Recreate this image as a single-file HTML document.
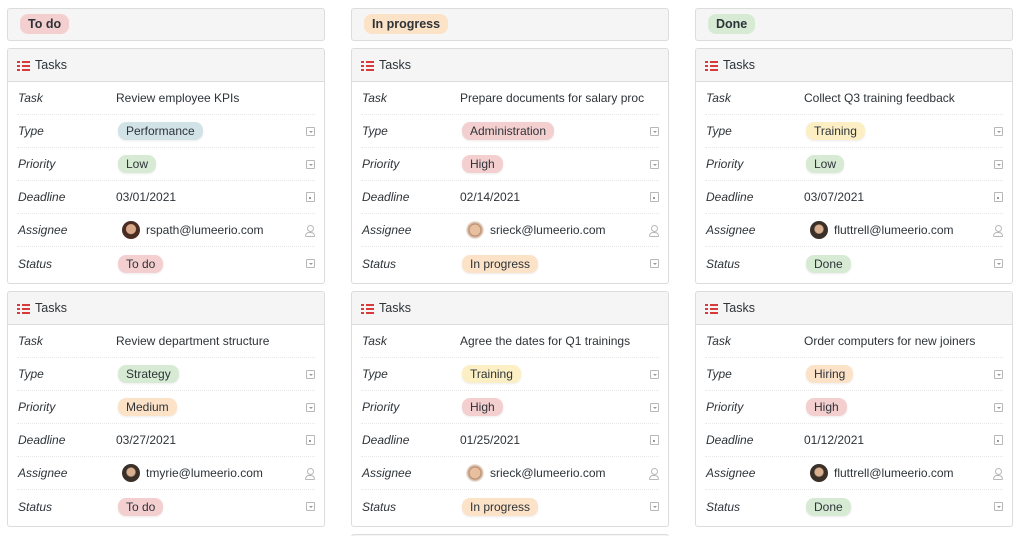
<!DOCTYPE html><html><head><style>
*{box-sizing:border-box;margin:0;padding:0}
html,body{width:1024px;height:536px;overflow:hidden}
body{background:#fff;font-family:"Liberation Sans",sans-serif;color:#2d3338;font-size:12px;position:relative}
.col{position:absolute;top:8px;width:318px}
.hd{height:33px;border:1px solid #dcdcdc;border-radius:3px;background:#f5f5f5;padding:5px 12px}
.card{margin-top:7px;border:1px solid #dcdcdc;border-radius:3px;height:236px;background:#fff;overflow:hidden}
.ch{height:33px;background:#f5f5f5;border-bottom:1px solid #dcdcdc;padding:8px 9px;font-size:12.5px;display:flex;align-items:center;gap:5px}
.row{height:33px;margin:0 9px;border-bottom:1px dotted #e6e6e6;display:flex;align-items:center;position:relative;white-space:nowrap;overflow:hidden}
.row:last-child{border-bottom:none}
.l{width:99px;flex:none;font-style:italic;padding-left:1px}
.p{display:inline-block;padding:2px 8px;border-radius:8px;margin-left:2px;box-shadow:0 1px 2px rgba(0,0,0,.08)}
.r{background:#f4cfcf}.o{background:#fce2c7}.g{background:#d7ebd4}.b{background:#d2e3e7}.y{background:#fcefc3}
.ic{position:absolute;right:0;top:12px;width:9px;height:9px;border:1px solid #b8b8b8;border-radius:1px}
.dd:after{content:"";position:absolute;left:2px;top:3px;border-left:2px solid transparent;border-right:2px solid transparent;border-top:2px solid #999}
.cal{top:11px;height:10px}.cal:after{content:"";position:absolute;left:2px;top:4px;width:2px;height:2px;background:#999}
.us{border:none;width:10px}.us:before{content:"";position:absolute;left:2px;top:-1px;width:5px;height:5px;border:1px solid #b8b8b8;border-radius:50%}.us:after{content:"";position:absolute;left:0;top:6px;width:8px;height:3px;border:1px solid #b8b8b8;border-radius:4px 4px 1px 1px}
.av{width:18px;height:18px;border-radius:50%;background:radial-gradient(circle at 50% 45%,#d9a88a 0 35%,#4a2c22 40%);margin:0 6px 0 6px;display:inline-block;flex:none}
.av2{background:radial-gradient(circle at 50% 50%,#e8c0a0 0 40%,#b98a6a 45%,#f3ede8 70%)}
.av3{background:radial-gradient(circle at 50% 45%,#d8b090 0 30%,#3a3028 38%)}
.hp{display:inline-block;padding:3px 8px;border-radius:8px;font-weight:bold;font-size:12.5px}
.li{width:13px;height:11px;position:relative}
.li i{position:absolute;left:5px;width:8px;height:2px;background:#d93a3a}
.li b{position:absolute;left:0;width:3px;height:2px;background:#d93a3a}
</style></head><body>

<div class="col" style="left:7px">
<div class="hd"><span class="hp r">To do</span></div>
<div class="card"><div class="ch"><span class="li"><b style="top:1px"></b><i style="top:1px"></i><b style="top:5px"></b><i style="top:5px"></i><b style="top:9px"></b><i style="top:9px"></i></span>Tasks</div>
<div class="row"><span class="l">Task</span>Review employee KPIs</div>
<div class="row"><span class="l">Type</span><span class="p b">Performance</span><span class="ic dd"></span></div>
<div class="row"><span class="l">Priority</span><span class="p g">Low</span><span class="ic dd"></span></div>
<div class="row"><span class="l">Deadline</span>03/01/2021<span class="ic cal"></span></div>
<div class="row"><span class="l">Assignee</span><span class="av"></span>rspath@lumeerio.com<span class="ic us"></span></div>
<div class="row"><span class="l">Status</span><span class="p r">To do</span><span class="ic dd"></span></div></div>
<div class="card"><div class="ch"><span class="li"><b style="top:1px"></b><i style="top:1px"></i><b style="top:5px"></b><i style="top:5px"></i><b style="top:9px"></b><i style="top:9px"></i></span>Tasks</div>
<div class="row"><span class="l">Task</span>Review department structure</div>
<div class="row"><span class="l">Type</span><span class="p g">Strategy</span><span class="ic dd"></span></div>
<div class="row"><span class="l">Priority</span><span class="p o">Medium</span><span class="ic dd"></span></div>
<div class="row"><span class="l">Deadline</span>03/27/2021<span class="ic cal"></span></div>
<div class="row"><span class="l">Assignee</span><span class="av av3"></span>tmyrie@lumeerio.com<span class="ic us"></span></div>
<div class="row"><span class="l">Status</span><span class="p r">To do</span><span class="ic dd"></span></div></div>
</div>

<div class="col" style="left:351px">
<div class="hd"><span class="hp o">In progress</span></div>
<div class="card"><div class="ch"><span class="li"><b style="top:1px"></b><i style="top:1px"></i><b style="top:5px"></b><i style="top:5px"></i><b style="top:9px"></b><i style="top:9px"></i></span>Tasks</div>
<div class="row"><span class="l">Task</span>Prepare documents for salary proc</div>
<div class="row"><span class="l">Type</span><span class="p r">Administration</span><span class="ic dd"></span></div>
<div class="row"><span class="l">Priority</span><span class="p r">High</span><span class="ic dd"></span></div>
<div class="row"><span class="l">Deadline</span>02/14/2021<span class="ic cal"></span></div>
<div class="row"><span class="l">Assignee</span><span class="av av2"></span>srieck@lumeerio.com<span class="ic us"></span></div>
<div class="row"><span class="l">Status</span><span class="p o">In progress</span><span class="ic dd"></span></div></div>
<div class="card"><div class="ch"><span class="li"><b style="top:1px"></b><i style="top:1px"></i><b style="top:5px"></b><i style="top:5px"></i><b style="top:9px"></b><i style="top:9px"></i></span>Tasks</div>
<div class="row"><span class="l">Task</span>Agree the dates for Q1 trainings</div>
<div class="row"><span class="l">Type</span><span class="p y">Training</span><span class="ic dd"></span></div>
<div class="row"><span class="l">Priority</span><span class="p r">High</span><span class="ic dd"></span></div>
<div class="row"><span class="l">Deadline</span>01/25/2021<span class="ic cal"></span></div>
<div class="row"><span class="l">Assignee</span><span class="av av2"></span>srieck@lumeerio.com<span class="ic us"></span></div>
<div class="row"><span class="l">Status</span><span class="p o">In progress</span><span class="ic dd"></span></div></div>
<div class="card" style="background:#f5f5f5;height:4px;border-bottom:none;border-radius:3px 3px 0 0"></div>
</div>

<div class="col" style="left:695px">
<div class="hd"><span class="hp g">Done</span></div>
<div class="card"><div class="ch"><span class="li"><b style="top:1px"></b><i style="top:1px"></i><b style="top:5px"></b><i style="top:5px"></i><b style="top:9px"></b><i style="top:9px"></i></span>Tasks</div>
<div class="row"><span class="l">Task</span>Collect Q3 training feedback</div>
<div class="row"><span class="l">Type</span><span class="p y">Training</span><span class="ic dd"></span></div>
<div class="row"><span class="l">Priority</span><span class="p g">Low</span><span class="ic dd"></span></div>
<div class="row"><span class="l">Deadline</span>03/07/2021<span class="ic cal"></span></div>
<div class="row"><span class="l">Assignee</span><span class="av av3"></span>fluttrell@lumeerio.com<span class="ic us"></span></div>
<div class="row"><span class="l">Status</span><span class="p g">Done</span><span class="ic dd"></span></div></div>
<div class="card"><div class="ch"><span class="li"><b style="top:1px"></b><i style="top:1px"></i><b style="top:5px"></b><i style="top:5px"></i><b style="top:9px"></b><i style="top:9px"></i></span>Tasks</div>
<div class="row"><span class="l">Task</span>Order computers for new joiners</div>
<div class="row"><span class="l">Type</span><span class="p o">Hiring</span><span class="ic dd"></span></div>
<div class="row"><span class="l">Priority</span><span class="p r">High</span><span class="ic dd"></span></div>
<div class="row"><span class="l">Deadline</span>01/12/2021<span class="ic cal"></span></div>
<div class="row"><span class="l">Assignee</span><span class="av av3"></span>fluttrell@lumeerio.com<span class="ic us"></span></div>
<div class="row"><span class="l">Status</span><span class="p g">Done</span><span class="ic dd"></span></div></div>
</div>
</body></html>
